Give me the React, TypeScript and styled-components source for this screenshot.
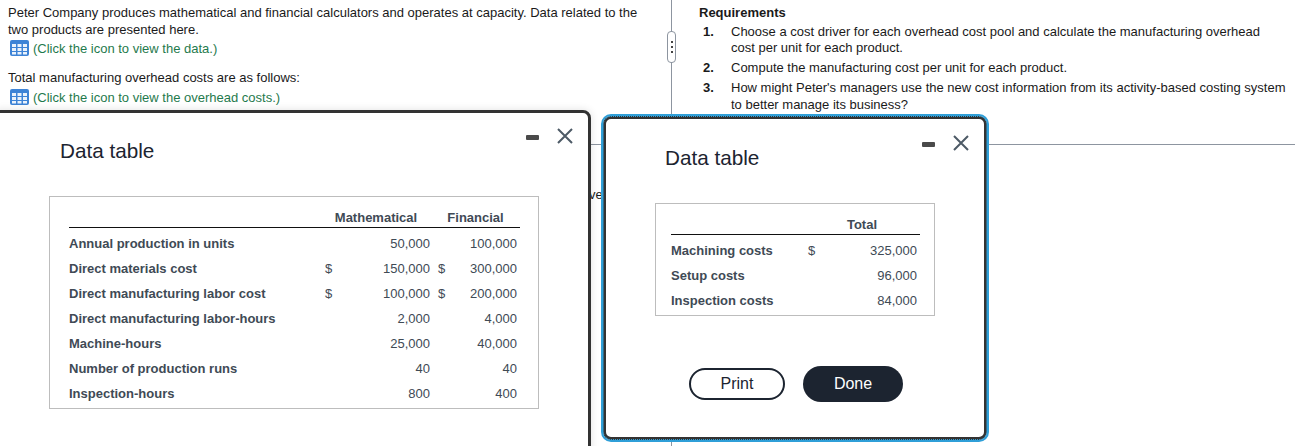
import React from "react"
import styled, { createGlobalStyle } from "styled-components"

const GlobalStyle = createGlobalStyle`
    html, body {
        margin: 0;
        height: 446px;
        overflow: hidden;
        background: #fff;
        font-family: "Liberation Sans", Arial, sans-serif;
        color: #1a1a1a;
    }
`

const leftRows = [
    { label: "Annual production in units", sign1: "", math: "50,000", sign2: "", fin: "100,000" },
    { label: "Direct materials cost", sign1: "$", math: "150,000", sign2: "$", fin: "300,000" },
    { label: "Direct manufacturing labor cost", sign1: "$", math: "100,000", sign2: "$", fin: "200,000" },
    { label: "Direct manufacturing labor-hours", sign1: "", math: "2,000", sign2: "", fin: "4,000" },
    { label: "Machine-hours", sign1: "", math: "25,000", sign2: "", fin: "40,000" },
    { label: "Number of production runs", sign1: "", math: "40", sign2: "", fin: "40" },
    { label: "Inspection-hours", sign1: "", math: "800", sign2: "", fin: "400" },
]

const rightRows = [
    { label: "Machining costs", sign: "$", total: "325,000" },
    { label: "Setup costs", sign: "", total: "96,000" },
    { label: "Inspection costs", sign: "", total: "84,000" },
]

const requirements = [
    "Choose a cost driver for each overhead cost pool and calculate the manufacturing overhead cost per unit for each product.",
    "Compute the manufacturing cost per unit for each product.",
    "How might Peter's managers use the new cost information from its activity-based costing system to better manage its business?",
]

const GridIcon = () => (
    <svg width="19" height="16" viewBox="0 0 19 16">
        <rect x="0" y="0" width="19" height="16" rx="2" fill="#3d83d6" />
        <g fill="#eaf2fb">
            <rect x="2" y="4" width="4" height="3" />
            <rect x="7.5" y="4" width="4" height="3" />
            <rect x="13" y="4" width="4" height="3" />
            <rect x="2" y="8" width="4" height="3" />
            <rect x="7.5" y="8" width="4" height="3" />
            <rect x="13" y="8" width="4" height="3" />
            <rect x="2" y="12" width="4" height="2.5" />
            <rect x="7.5" y="12" width="4" height="2.5" />
            <rect x="13" y="12" width="4" height="2.5" />
        </g>
    </svg>
)

const WindowControls = ({ top, right }: { top: number; right: number }) => (
    <Controls $top={top} $right={right}>
        <Minimize />
        <svg width="16" height="16" viewBox="0 0 16 16">
            <path d="M1 1 L15 15 M15 1 L1 15" stroke="#4d5a66" strokeWidth="2" fill="none" />
        </svg>
    </Controls>
)

const App = () => {
    return (
        <Page>
            <GlobalStyle />
            <LeftPane>
                <Para>
                    Peter Company produces mathematical and financial calculators and operates at capacity. Data related to the two products are
                    presented here.
                </Para>
                <IconLine $gap={0}>
                    <GridIcon />
                    <span>(Click the icon to view the data.)</span>
                </IconLine>
                <SecondPara>Total manufacturing overhead costs are as follows:</SecondPara>
                <IconLine $gap={1}>
                    <GridIcon />
                    <span>(Click the icon to view the overhead costs.)</span>
                </IconLine>
            </LeftPane>

            <Divider>
                <Handle>
                    <Dot />
                    <Dot />
                    <Dot />
                </Handle>
            </Divider>

            <RightPane>
                <ReqTitle>Requirements</ReqTitle>
                <ReqList>
                    {requirements.map((text, index) => (
                        <ReqItem key={index}>
                            <ReqNumber>{index + 1}.</ReqNumber>
                            <span>{text}</span>
                        </ReqItem>
                    ))}
                </ReqList>
            </RightPane>

            <Rule />
            <BehindText>ve</BehindText>

            <LeftDialog>
                <WindowControls top={15} right={15} />
                <DialogTitle>Data table</DialogTitle>
                <LeftTableBox>
                    <DataTable>
                        <colgroup>
                            <col style={{ width: 256 }} />
                            <col style={{ width: 20 }} />
                            <col style={{ width: 88 }} />
                            <col style={{ width: 14 }} />
                            <col style={{ width: 73 }} />
                        </colgroup>
                        <thead>
                            <tr>
                                <HeadCell />
                                <HeadCell colSpan={2} $shift={6}>
                                    Mathematical
                                </HeadCell>
                                <HeadCell colSpan={2} $shift={2}>
                                    Financial
                                </HeadCell>
                            </tr>
                        </thead>
                        <tbody>
                            {leftRows.map((row) => (
                                <tr key={row.label}>
                                    <LabelCell>{row.label}</LabelCell>
                                    <SignCell>{row.sign1}</SignCell>
                                    <NumCell>{row.math}</NumCell>
                                    <SignCell $inset={5}>{row.sign2}</SignCell>
                                    <NumCell>{row.fin}</NumCell>
                                </tr>
                            ))}
                        </tbody>
                    </DataTable>
                </LeftTableBox>
            </LeftDialog>

            <RightDialog>
                <WindowControls top={16} right={15} />
                <DialogTitle>Data table</DialogTitle>
                <RightTableBox>
                    <DataTable>
                        <colgroup>
                            <col style={{ width: 137 }} />
                            <col style={{ width: 20 }} />
                            <col style={{ width: 92 }} />
                        </colgroup>
                        <thead>
                            <tr>
                                <HeadCell />
                                <HeadCell colSpan={2} $shift={4}>
                                    Total
                                </HeadCell>
                            </tr>
                        </thead>
                        <tbody>
                            {rightRows.map((row) => (
                                <tr key={row.label}>
                                    <LabelCell>{row.label}</LabelCell>
                                    <SignCell>{row.sign}</SignCell>
                                    <NumCell>{row.total}</NumCell>
                                </tr>
                            ))}
                        </tbody>
                    </DataTable>
                </RightTableBox>
                <ButtonRow>
                    <PrintButton>Print</PrintButton>
                    <DoneButton>Done</DoneButton>
                </ButtonRow>
            </RightDialog>
        </Page>
    )
}

const Page = styled.div`
    position: relative;
    display: flex;
    width: 1295px;
    height: 446px;
    overflow: hidden;
    font-size: 13px;
    line-height: 17px;
`

const LeftPane = styled.div`
    width: 663px;
    box-sizing: border-box;
    padding: 4px 24px 0 8px;
    color: #1a1a1a;
`

const Para = styled.div``

const SecondPara = styled.div`
    margin-top: 11px;
`

const IconLine = styled.div<{ $gap: number }>`
    display: flex;
    align-items: center;
    gap: 4px;
    height: 20px;
    margin-top: ${(props) => props.$gap}px;
    padding-left: 2px;
    color: #1f7a4d;

    svg {
        flex: none;
    }
`

const Divider = styled.div`
    position: relative;
    width: 1px;
    height: 446px;
    margin-left: 8px;
    background: #8d95a0;
`

const Handle = styled.div`
    position: absolute;
    left: -4px;
    top: 31px;
    width: 7px;
    height: 30px;
    display: flex;
    flex-direction: column;
    align-items: center;
    justify-content: center;
    gap: 3px;
    background: #fff;
    border: 1px solid #8d95a0;
    border-radius: 4px;
`

const Dot = styled.span`
    width: 2px;
    height: 2px;
    background: #444;
`

const RightPane = styled.div`
    flex: 1;
    padding: 4px 8px 0 27px;
`

const ReqTitle = styled.div`
    font-weight: bold;
`

const ReqList = styled.ol`
    margin: 3px 0 0;
    padding: 0 0 0 4px;
    list-style: none;
    line-height: 16.4px;
`

const ReqItem = styled.li`
    display: flex;
    margin-bottom: 3.6px;
`

const ReqNumber = styled.span`
    flex: none;
    width: 28px;
    font-weight: bold;
`

const Rule = styled.div`
    position: absolute;
    left: 580px;
    right: 0;
    top: 144px;
    height: 1px;
    background: #8d95a0;
`

const BehindText = styled.div`
    position: absolute;
    left: 589px;
    top: 186px;
`

const LeftDialog = styled.div`
    position: absolute;
    left: -8px;
    top: 110px;
    width: 599px;
    height: 351px;
    box-sizing: border-box;
    background: #fff;
    border: 3px solid #333;
    border-radius: 8px;
    box-shadow: 0 0 8px rgba(0, 0, 0, 0.12);
    padding: 26px 0 0 65px;
`

const RightDialog = styled.div`
    position: absolute;
    left: 603px;
    top: 116px;
    width: 384px;
    height: 324px;
    box-sizing: border-box;
    background: #fff;
    border: 3px solid #333;
    border-radius: 8px;
    outline: 2px solid #2f9fd8;
    outline-offset: 0;
    padding: 27px 0 0 59px;

    /* focus ring bleeds into the dark border as a dotted row */
    &::before {
        content: "";
        position: absolute;
        inset: -3px;
        border: 1px dotted #2f9fd8;
        border-radius: 8px;
        pointer-events: none;
    }
`

const Controls = styled.div<{ $top: number; $right: number }>`
    position: absolute;
    top: ${(props) => props.$top}px;
    right: ${(props) => props.$right}px;
    display: flex;
    align-items: center;
    gap: 18px;
`

const Minimize = styled.span`
    width: 13px;
    height: 5px;
    margin-top: 3px;
    border-radius: 1px;
    background: #4a4a4a;
`

const DialogTitle = styled.div`
    font-size: 20.7px;
    line-height: 24px;
    color: #1c2430;
`

const LeftTableBox = styled.div`
    width: 490px;
    height: 213px;
    box-sizing: border-box;
    margin: 33px 0 0 -11px;
    padding: 6px 18px 0 19px;
    border: 1px solid #bdbdbd;
`

const RightTableBox = styled.div`
    width: 280px;
    height: 113px;
    box-sizing: border-box;
    margin: 33px 0 0 -10px;
    padding: 6px 14px 0 15px;
    border: 1px solid #bdbdbd;
`

const DataTable = styled.table`
    width: 100%;
    table-layout: fixed;
    border-collapse: collapse;
    font-size: 13px;
    line-height: 17px;
    color: #404a55;
`

const HeadCell = styled.th<{ $shift?: number }>`
    height: 23px;
    padding: 0 ${(props) => props.$shift ?? 0}px 1px 0;
    font-weight: bold;
    text-align: center;
    vertical-align: bottom;
    border-bottom: 1px solid #111;
`

const LabelCell = styled.td`
    height: 20px;
    padding: 5px 0 0;
    font-weight: bold;
    white-space: nowrap;
`

const SignCell = styled.td<{ $inset?: number }>`
    padding: 5px 0 0 ${(props) => props.$inset ?? 0}px;
    text-align: left;
`

const NumCell = styled.td`
    padding: 5px 3px 0 0;
    text-align: right;
`

const ButtonRow = styled.div`
    display: flex;
    align-items: center;
    gap: 18px;
    margin: 50px 0 0 24px;
`

const PrintButton = styled.button`
    width: 96px;
    height: 32px;
    background: #fff;
    border: 2px solid #1c2430;
    border-radius: 16px;
    font-family: inherit;
    font-size: 16px;
    color: #1c2430;
`

const DoneButton = styled.button`
    width: 100px;
    height: 36px;
    background: #1c2430;
    border: 0;
    border-radius: 18px;
    font-family: inherit;
    font-size: 16px;
    color: #fff;
`

export default App
